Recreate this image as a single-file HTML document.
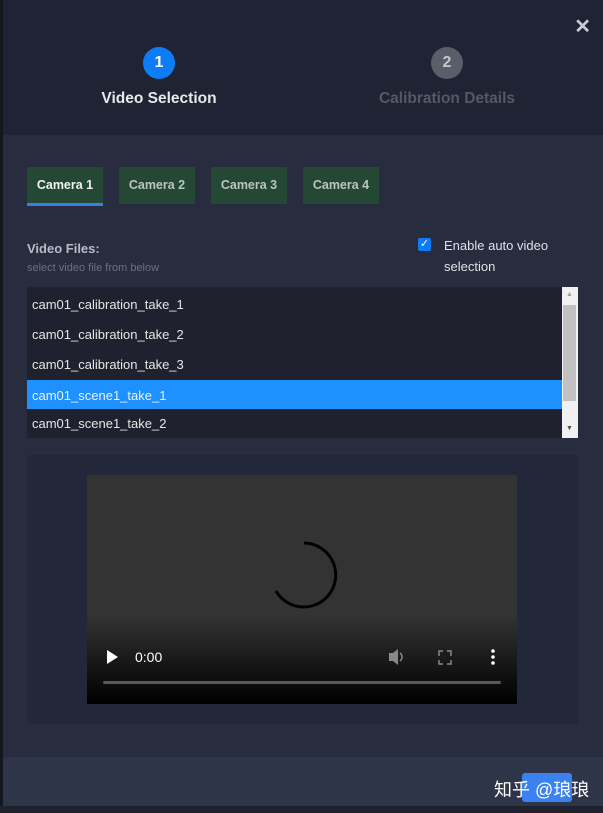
<!DOCTYPE html>
<html><head><meta charset="utf-8"><style>
*{margin:0;padding:0;box-sizing:border-box}
body{width:603px;height:813px;background:#1b1e28;font-family:"Liberation Sans",sans-serif;position:relative;overflow:hidden}
.strip{position:absolute;left:0;top:0;width:3px;height:813px;background:#15171f}
.head{position:absolute;left:3px;top:0;width:600px;height:135px;background:#1f2333}
.body{position:absolute;left:3px;top:135px;width:600px;height:622px;background:#272c3e}
.foot{position:absolute;left:3px;top:757px;width:600px;height:49px;background:#2f3548}
.bot{position:absolute;left:0;top:806px;width:603px;height:7px;background:#1e212b}
.circ{position:absolute;width:32px;height:32px;border-radius:50%;color:#fff;font-weight:bold;font-size:16px;text-align:center;line-height:32px}
.step{position:absolute;font-weight:bold;font-size:15.5px;text-align:center;width:200px}
.tab{position:absolute;top:167px;width:76px;height:37px;background:#244834;color:#b9c6bd;font-weight:bold;font-size:12.5px;text-align:center;line-height:37px}
.list{position:absolute;left:27px;top:287px;width:551px;height:151px;background:#1f222e;overflow:hidden;padding-top:3px}
.row{height:30px;line-height:30px;padding-left:5px;color:#e6e6e6;font-size:13px;width:535px}
.sb{position:absolute;right:0;top:0;width:16px;height:151px;background:#f1f1f1}
.thumb{position:absolute;left:1px;top:18px;width:13px;height:96px;background:#c1c1c1}
</style></head><body>
<div class="strip"></div>
<div class="head">
<div style="position:absolute;right:12px;top:14px;color:#c9ccd3;font-size:20px;font-weight:bold">✕</div>
</div>
<div class="circ" style="left:143px;top:47px;background:#0d7df7">1</div>
<div class="step" style="left:59px;top:90px;color:#e8e9ec">Video Selection</div>
<div class="circ" style="left:431px;top:47px;background:#5a5e68;color:#c6c8cc">2</div>
<div class="step" style="left:347px;top:90px;color:#545966">Calibration Details</div>
<div class="body"></div>
<div class="tab" style="left:27px;color:#f0f3f1;height:36px">Camera 1</div>
<div style="position:absolute;left:27px;top:203px;width:76px;height:3px;background:#3a7fe0"></div>
<div class="tab" style="left:119px">Camera 2</div>
<div class="tab" style="left:211px">Camera 3</div>
<div class="tab" style="left:303px">Camera 4</div>
<div style="position:absolute;left:27px;top:241px;color:#b8bcc6;font-size:13px;font-weight:bold">Video Files:</div>
<div style="position:absolute;left:27px;top:262px;color:#6c7180;font-size:11px">select video file from below</div>
<div style="position:absolute;left:418px;top:238px;width:13px;height:13px;background:#0d7df7;border-radius:2px;color:#fff;font-size:11px;line-height:13px;text-align:center">✓</div>
<div style="position:absolute;left:444px;top:235px;color:#dfe1e6;font-size:13px;line-height:21px">Enable auto video<br>selection</div>
<div class="list">
<div class="row">cam01_calibration_take_1</div>
<div class="row">cam01_calibration_take_2</div>
<div class="row">cam01_calibration_take_3</div>
<div class="row" style="background:#1e90ff;color:#e8f2ff;height:29px;line-height:31px">cam01_scene1_take_1</div>
<div class="row">cam01_scene1_take_2</div>
<div class="sb"><div class="thumb"></div>
<div style="position:absolute;left:4px;top:4px;font-size:7px;color:#a0a0a0">▲</div>
<div style="position:absolute;left:4px;top:138px;font-size:7px;color:#505050">▼</div></div>
</div>
<div style="position:absolute;left:27px;top:455px;width:551px;height:269px;background:#23273a"></div>
<div style="position:absolute;left:87px;top:475px;width:430px;height:229px;background:linear-gradient(#333 0,#333 140px,#000 229px)">
<svg width="430" height="229" style="position:absolute;left:0;top:0">
<path d="M217 68 A32 32 0 1 1 189 116" fill="none" stroke="#000" stroke-width="3"/>
<path d="M20 175 L31 182 L20 189Z" fill="#fff"/>
<text x="48" y="187" fill="#fff" font-family="Liberation Sans" font-size="14">0:00</text>
<path d="M302 178h4l5-4v16l-5-4h-4z" fill="#888"/>
<path d="M313 178a5 5 0 0 1 0 8" stroke="#888" fill="none" stroke-width="1.5"/>
<path d="M352 181v-5h4M360 176h4v5M364 185v4h-4M356 189h-4v-4" stroke="#888" fill="none" stroke-width="1.5"/>
<circle cx="406" cy="176" r="1.8" fill="#fff"/><circle cx="406" cy="182" r="1.8" fill="#fff"/><circle cx="406" cy="188" r="1.8" fill="#fff"/>
<rect x="16" y="206" width="398" height="3" rx="1.5" fill="#5a5a5a"/>
</svg></div>
<div class="foot"></div>
<div style="position:absolute;left:522px;top:773px;width:50px;height:29px;background:#3a82f0;border-radius:3px"></div>
<div style="position:absolute;left:494px;top:776px;color:#fff;font-size:18px;font-family:'Liberation Sans','Noto Sans CJK SC',sans-serif">知乎 @琅琅</div>
<div class="bot"></div>
</body></html>
